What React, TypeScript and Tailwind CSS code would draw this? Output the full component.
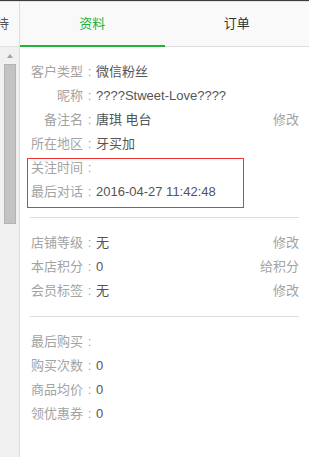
import type { ReactNode } from 'react';

type Row = { label: string; value?: ReactNode; action?: string };

const PROFILE: Row[] = [
  { label: '客户类型', value: '微信粉丝' },
  { label: '昵称', value: '????Stweet-Love????' },
  { label: '备注名', value: '唐琪 电台', action: '修改' },
  { label: '所在地区', value: '牙买加' },
];

const CHAT: Row[] = [
  { label: '关注时间' },
  { label: '最后对话', value: '2016-04-27 11:42:48' },
];

const SHOP: Row[] = [
  { label: '店铺等级', value: '无', action: '修改' },
  { label: '本店积分', value: '0', action: '给积分' },
  { label: '会员标签', value: '无', action: '修改' },
];

const ORDERS: Row[] = [
  { label: '最后购买' },
  { label: '购买次数', value: '0' },
  { label: '商品均价', value: '0' },
  { label: '领优惠券', value: '0' },
];

function InfoRow({ label, value, action }: Row) {
  return (
    <div className="flex h-[24px] items-center whitespace-nowrap">
      <span className="flex w-[66px] shrink-0 justify-end text-[#a3a3a3]">
        {label}
        <span className="w-[13px] text-center">:</span>
      </span>
      <span className="flex-1 truncate text-[#555]">{value}</span>
      {action && <span className="text-[#a3a3a3]">{action}</span>}
    </div>
  );
}

function Group({ rows }: { rows: Row[] }) {
  return <>{rows.map(r => <InfoRow key={r.label} {...r} />)}</>;
}

export default function App() {
  return (
    <div
      className="flex h-screen w-full overflow-hidden border-t border-[#3c3c3c] bg-white text-[13px]"
      style={{ fontFamily: '"Liberation Sans", "Noto Sans CJK SC", sans-serif' }}
    >
      {/* left column: clipped neighbour panel + scrollbar */}
      <div className="flex w-[20px] shrink-0 flex-col border-r border-[#ddd]">
        <div className="flex h-[46px] items-center justify-end overflow-hidden border-t border-b border-[#e2e2e2] bg-[#f9f9f9] pr-[10px] text-[#555]">
          <span className="whitespace-nowrap">接待</span>
        </div>
        <div className="flex flex-1 flex-col bg-[#f0f0f0] pt-[7px]">
          <div className="ml-[7px] h-0 w-0 border-x-[3.5px] border-b-[4px] border-x-transparent border-b-[#a3a3a3]" />
          <div className="mt-[6px] ml-[4px] h-[160px] w-[12px] border border-[#b3b3b3] bg-[#c3c3c3]" />
        </div>
      </div>

      <div className="flex min-w-0 flex-1 flex-col">
        <div className="flex h-[46px] border-t border-[#e2e2e2] bg-[#f9f9f9]">
          <div className="flex flex-1 items-center justify-center border-b-2 border-[#22b33a] text-[#22b33a]">资料</div>
          <div className="flex flex-1 items-center justify-center border-b border-[#ddd] text-[#333]">订单</div>
        </div>

        <div className="px-[10px]">
          <div className="border-b border-[#ddd] py-[13px]">
            <Group rows={PROFILE} />
            <div className="relative">
              <Group rows={CHAT} />
              <span className="pointer-events-none absolute top-[2px] left-[-3px] h-[50px] w-[217px] border border-[#f03434]" />
            </div>
          </div>
          <div className="border-b border-[#ddd] py-[13px]">
            <Group rows={SHOP} />
          </div>
          <div className="py-[13px]">
            <Group rows={ORDERS} />
          </div>
        </div>
      </div>
    </div>
  );
}
